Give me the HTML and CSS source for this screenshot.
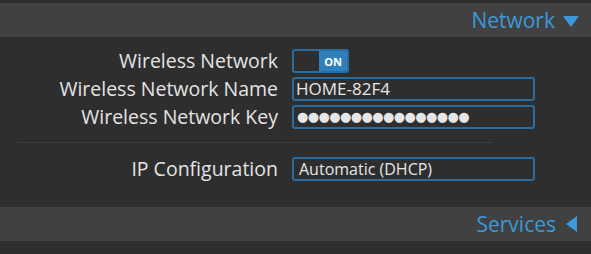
FILE: index.html
```html
<!DOCTYPE html>
<html lang="en">
<head>
    <meta charset="UTF-8">
    <meta name="viewport" content="width=device-width, initial-scale=1.0">
    <title>Network Settings</title>
    <link rel="stylesheet" href="styles.css">
</head>
<body>
    <div class="panel-header">
        <span class="panel-title">Network</span>
        <span class="arrow arrow-down"></span>
    </div>

    <div class="panel-body">
        <div class="form-grid">
            <label class="form-label">Wireless Network</label>
            <div class="toggle">
                <span class="toggle-off"></span>
                <span class="toggle-on">ON</span>
            </div>

            <label class="form-label">Wireless Network Name</label>
            <div class="field">HOME-82F4</div>

            <label class="form-label">Wireless Network Key</label>
            <div class="field field-dots">&#9679;&#9679;&#9679;&#9679;&#9679;&#9679;&#9679;&#9679;&#9679;&#9679;&#9679;&#9679;&#9679;&#9679;&#9679;&#9679;</div>
        </div>

        <hr class="divider">

        <div class="form-grid">
            <label class="form-label">IP Configuration</label>
            <div class="field field-small">Automatic (DHCP)</div>
        </div>
    </div>

    <div class="panel-header">
        <span class="panel-title">Services</span>
        <span class="arrow arrow-left"></span>
    </div>
</body>
</html>
```

FILE: styles.css
```css
* {
    margin: 0;
    padding: 0;
    box-sizing: border-box;
}

body {
    background: #2e2e2e;
    color: #e4e4e4;
    font-family: 'Open Sans', sans-serif;
    padding-top: 3px;
    height: 100vh;
    overflow: hidden;
}

.panel-header {
    background: #414141;
    height: 34px;
    display: flex;
    justify-content: flex-end;
    align-items: center;
    padding-right: 12px;
    gap: 8px;
}

.panel-title {
    color: #3a9ad9;
    font-size: 21px;
}

.arrow {
    width: 0;
    height: 0;
}

.arrow-down {
    border-left: 8px solid transparent;
    border-right: 8px solid transparent;
    border-top: 11px solid #3a9ad9;
    margin-top: 2px;
}

.arrow-left {
    border-top: 8px solid transparent;
    border-bottom: 8px solid transparent;
    border-right: 11px solid #3a9ad9;
    margin-left: 2px;
    margin-right: 2px;
}

.panel-body {
    padding: 12px 0 26px;
}

.form-grid {
    display: grid;
    grid-template-columns: 260px 243px;
    column-gap: 14px;
    row-gap: 4px;
    margin-left: 18px;
}

.form-label {
    text-align: right;
    font-size: 19.5px;
    line-height: 24px;
}

.toggle {
    display: flex;
    width: 57px;
    height: 24px;
    border: 2px solid #2a6d9e;
    border-radius: 3px;
    overflow: hidden;
}

.toggle-off {
    flex: 1;
    background: #2e2e2e;
}

.toggle-on {
    width: 28px;
    background: #2f7fbd;
    color: #ffffff;
    font-size: 11px;
    font-weight: bold;
    display: flex;
    align-items: center;
    justify-content: center;
}

.field {
    height: 24px;
    border: 2px solid #2a6d9e;
    border-radius: 3px;
    padding: 0 2px;
    font-size: 17px;
    line-height: 20px;
    color: #e6e6e6;
    white-space: nowrap;
    overflow: hidden;
}

.field-dots {
    font-family: 'DejaVu Sans', sans-serif;
    font-size: 13px;
    letter-spacing: -0.6px;
    padding-left: 3px;
}

.field-small {
    font-size: 16px;
    padding-left: 5px;
}

.divider {
    border: 0;
    border-top: 1px solid #3d3d3d;
    margin: 13px 98px 14px 18px;
}
```
